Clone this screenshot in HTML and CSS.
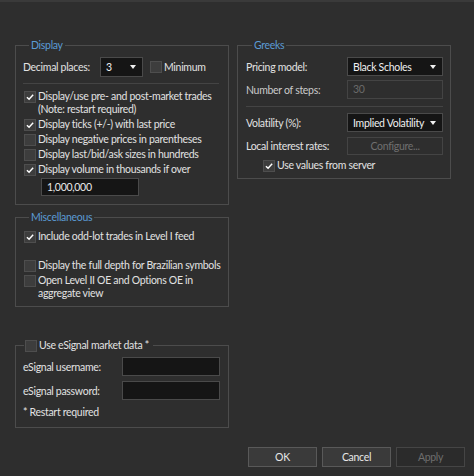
FILE: index.html
```html
<!DOCTYPE html>
<html>
<head>
<meta charset="utf-8">
<link rel="stylesheet" href="styles.css">
</head>
<body>
<div class="topbar"></div>
<div class="dialog">
  <div class="col-left">
    <div class="group g-display">
      <div class="legend">Display</div>
      <div class="row-dec">
        <span class="lbl">Decimal places:</span>
        <div class="select sel-dec"><span>3</span><i class="arrow"></i></div>
        <span class="cb"></span><span class="cb-text">Minimum</span>
      </div>
      <div class="sep"></div>
      <div class="checks">
        <div class="check c-first"><span class="cb on"><svg viewBox="0 0 12 12"><path d="M2.3 6.2 L4.9 8.8 L9.8 3.2" /></svg></span><span class="ct">Display/use pre- and post-market trades<br>(Note: restart required)</span></div>
        <div class="check"><span class="cb on"><svg viewBox="0 0 12 12"><path d="M2.3 6.2 L4.9 8.8 L9.8 3.2" /></svg></span><span class="ct">Display ticks (+/-) with last price</span></div>
        <div class="check"><span class="cb"></span><span class="ct">Display negative prices in parentheses</span></div>
        <div class="check"><span class="cb"></span><span class="ct">Display last/bid/ask sizes in hundreds</span></div>
        <div class="check"><span class="cb on"><svg viewBox="0 0 12 12"><path d="M2.3 6.2 L4.9 8.8 L9.8 3.2" /></svg></span><span class="ct">Display volume in thousands if over</span></div>
      </div>
      <div class="input inp-vol">1,000,000</div>
    </div>

    <div class="group g-misc">
      <div class="legend">Miscellaneous</div>
      <div class="check c-odd"><span class="cb on"><svg viewBox="0 0 12 12"><path d="M2.3 6.2 L4.9 8.8 L9.8 3.2" /></svg></span><span class="ct">Include odd-lot trades in Level I feed</span></div>
      <div class="check c-braz"><span class="cb"></span><span class="ct">Display the full depth for Brazilian symbols</span></div>
      <div class="check"><span class="cb"></span><span class="ct">Open Level II OE and Options OE in<br>aggregate view</span></div>
    </div>

    <div class="group g-esig">
      <div class="legend legend-cb"><span class="cb"></span><span class="ct">Use eSignal market data *</span></div>
      <div class="frow">
        <span class="lbl">eSignal username:</span>
        <div class="input inp-es"></div>
      </div>
      <div class="frow">
        <span class="lbl">eSignal password:</span>
        <div class="input inp-es"></div>
      </div>
      <div class="note">* Restart required</div>
    </div>
  </div>

  <div class="col-right">
    <div class="group g-greeks">
      <div class="legend">Greeks</div>
      <div class="grow">
        <span class="lbl">Pricing model:</span>
        <div class="select sel-g"><span>Black Scholes</span><i class="arrow"></i></div>
      </div>
      <div class="grow">
        <span class="lbl dim">Number of steps:</span>
        <div class="input sel-g disabled">30</div>
      </div>
      <div class="sep sep-g"></div>
      <div class="grow">
        <span class="lbl">Volatility (%):</span>
        <div class="select sel-g"><span>Implied Volatility</span><i class="arrow"></i></div>
      </div>
      <div class="grow">
        <span class="lbl">Local interest rates:</span>
        <div class="btn-cfg sel-g">Configure...</div>
      </div>
      <div class="check c-srv"><span class="cb on"><svg viewBox="0 0 12 12"><path d="M2.3 6.2 L4.9 8.8 L9.8 3.2" /></svg></span><span class="ct">Use values from server</span></div>
    </div>
  </div>
</div>
<div class="footer">
  <div class="btn">OK</div>
  <div class="btn">Cancel</div>
  <div class="btn btn-dis">Apply</div>
</div>
</body>
</html>
```

FILE: styles.css
```css
html, body {
  margin: 0;
  padding: 0;
  background: #2e2e2e;
  width: 474px;
  height: 476px;
  overflow: hidden;
  font-family: "Lato", "Liberation Sans", sans-serif;
  font-size: 10.5px;
  letter-spacing: -0.3px;
  color: #e2e2e2;
}
.topbar {
  height: 2px;
  background: #3a3a3a;
}
.dialog {
  display: grid;
  grid-template-columns: 214px 214px;
  column-gap: 8px;
  padding: 43px 0 0 15px;
}
.col-left {
  display: flex;
  flex-direction: column;
}
.group {
  box-sizing: border-box;
  border: 1px solid #4c4c4c;
  display: flex;
  flex-direction: column;
}
.legend {
  align-self: flex-start;
  margin: -7px 0 0 6px;
  padding: 0 2px;
  background: #2e2e2e;
  color: #5b9bd5;
  line-height: 13px;
  height: 13px;
}
.g-display {
  height: 160px;
  padding: 0 8px 0 7px;
}
.row-dec {
  display: flex;
  align-items: center;
  margin-top: 5px;
  height: 20px;
}
.lbl {
  white-space: nowrap;
}
.row-dec .lbl {
  width: 77px;
}
.select {
  box-sizing: border-box;
  height: 20px;
  background: #151515;
  border: 1px solid #4a4a4a;
  display: flex;
  align-items: center;
  padding: 0 0 0 5px;
  color: #f0f0f0;
  white-space: nowrap;
}
.select span {
  flex: 1;
}
.arrow {
  width: 0;
  height: 0;
  border-left: 3.5px solid transparent;
  border-right: 3.5px solid transparent;
  border-top: 4px solid #f0f0f0;
  margin-right: 6px;
}
.sel-dec {
  width: 43px;
  margin-right: 7px;
}
.cb {
  box-sizing: border-box;
  flex: none;
  width: 12px;
  height: 12px;
  background: #3d3d3d;
  border: 1px solid #4e4e4e;
  display: inline-flex;
  align-items: center;
  justify-content: center;
}
.cb svg {
  width: 12px;
  height: 12px;
}
.cb svg path {
  fill: none;
  stroke: #ffffff;
  stroke-width: 1.7;
}
.cb-text {
  margin-left: 2px;
}
.sep {
  height: 1px;
  background: #444444;
  margin: 6px 1px 0 0;
}
.checks {
  margin-top: 6px;
  display: flex;
  flex-direction: column;
}
.check {
  display: flex;
  align-items: flex-start;
  padding-left: 1px;
  line-height: 12.5px;
  min-height: 15px;
}
.c-first {
  min-height: 28px;
}
.check .cb {
  margin-top: 0.5px;
}
.ct {
  margin-left: 2px;
  white-space: nowrap;
}
.input {
  box-sizing: border-box;
  height: 18px;
  background: #151515;
  border: 1px solid #4a4a4a;
  padding: 0 0 0 5px;
  line-height: 16px;
  color: #e8e8e8;
}
.inp-vol {
  width: 98px;
  margin: 0 0 0 18px;
}
.g-misc {
  margin-top: 12px;
  height: 90px;
  padding: 0 8px 0 7px;
}
.c-odd {
  margin-top: 6px;
}
.c-braz {
  margin-top: 14px;
}
.g-esig {
  margin-top: 38px;
  height: 83px;
  padding: 0 8px 0 7px;
}
.legend-cb {
  display: flex;
  align-items: center;
  color: #e2e2e2;
  margin-left: 1px;
  padding: 0 4px 0 1px;
}
.frow {
  display: flex;
  align-items: center;
  justify-content: space-between;
  margin-top: 5px;
  height: 19px;
}
.inp-es {
  width: 98px;
  height: 19px;
}
.note {
  margin-top: 6px;
  line-height: 12px;
}
.g-greeks {
  height: 134px;
  padding: 0 7px 0 8px;
}
.grow {
  display: flex;
  align-items: center;
  justify-content: space-between;
  height: 19px;
  margin-top: 4px;
}
.g-greeks .legend + .grow {
  margin-top: 5px;
}
.sel-g {
  width: 96px;
  height: 19px;
}
.disabled {
  color: #6a6a6a;
  background: #2e2e2e;
  border-color: #444444;
}
.dim {
  color: #cacaca;
}
.sep-g {
  margin: 7px 0 6px 0;
}
.sep-g + .grow {
  margin-top: 0;
}
.btn-cfg {
  box-sizing: border-box;
  border: 1px solid #444444;
  color: #707070;
  text-align: center;
  line-height: 17px;
  height: 18px;
}
.c-srv {
  margin: 4px 0 0 16px;
}
.footer {
  display: flex;
  justify-content: flex-end;
  gap: 5px;
  padding-right: 9px;
  margin-top: 19px;
}
.btn {
  box-sizing: border-box;
  width: 69px;
  height: 20px;
  background: #3a3a3a;
  border: 1px solid #595959;
  color: #e8e8e8;
  text-align: center;
  line-height: 18px;
}
.btn-dis {
  background: #2b2b2b;
  border-color: #454545;
  color: #6e6e6e;
}
```
